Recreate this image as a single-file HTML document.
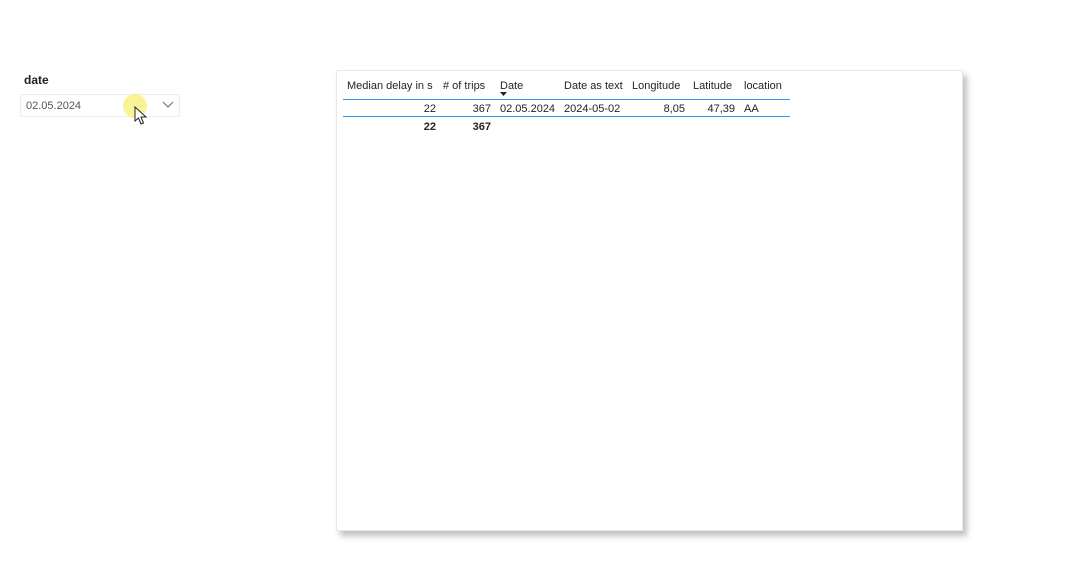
<html><head><style>
body{margin:0;width:1065px;height:574px;background:#fff;position:relative;font-family:"Liberation Sans",sans-serif;overflow:hidden}
.a{position:absolute;font-size:11px;color:#252423;white-space:nowrap;line-height:13px}
.r{text-align:right}
</style></head><body>
<div class="a" style="left:24px;top:74px;font-size:12px;font-weight:bold;color:#222">date</div>
<div style="position:absolute;left:20px;top:94px;width:158px;height:21px;border:1px solid #ececec"></div>
<div class="a" style="left:26px;top:100px;color:#555">02.05.2024</div>
<svg style="position:absolute;left:162px;top:101px" width="12" height="8"><path d="M1 1L6 6L11 1" fill="none" stroke="#666" stroke-width="1"/></svg>
<div style="position:absolute;left:123px;top:94px;width:24px;height:24px;border-radius:50%;background:rgba(245,235,80,.6)"></div>
<svg style="position:absolute;left:134px;top:106px" width="14" height="20"><path d="M1 1L1 15L4.5 12L7 18L9.5 17L7 11L12 11Z" fill="#fff" stroke="#222" stroke-width="1"/></svg>
<div style="position:absolute;left:336px;top:70px;width:625px;height:459px;background:#fff;border:1px solid #e8e8e8;box-shadow:4px 5px 6px rgba(0,0,0,.25)"></div>
<div style="position:absolute;left:343px;top:99px;width:447px;height:1px;background:#2e9af5"></div>
<div style="position:absolute;left:343px;top:116px;width:447px;height:1px;background:#2e9af5"></div>
<div class="a" style="left:347px;top:80px">Median delay in s</div>
<div class="a" style="left:443px;top:80px">#&nbsp;of trips</div>
<div class="a" style="left:500px;top:80px">Date</div>
<svg style="position:absolute;left:500px;top:92px" width="8" height="5"><path d="M0 0H7L3.5 4Z" fill="#252423"/></svg>
<div class="a" style="left:564px;top:80px">Date as text</div>
<div class="a" style="left:632px;top:80px">Longitude</div>
<div class="a" style="left:693px;top:80px">Latitude</div>
<div class="a" style="left:744px;top:80px">location</div>
<div class="a r" style="left:380px;width:56px;top:103px">22</div>
<div class="a r" style="left:440px;width:51px;top:103px">367</div>
<div class="a" style="left:500px;top:103px">02.05.2024</div>
<div class="a" style="left:564px;top:103px">2024-05-02</div>
<div class="a r" style="left:630px;width:55px;top:103px">8,05</div>
<div class="a r" style="left:690px;width:45px;top:103px">47,39</div>
<div class="a" style="left:744px;top:103px">AA</div>
<div class="a r" style="left:380px;width:56px;top:121px;font-weight:bold">22</div>
<div class="a r" style="left:440px;width:51px;top:121px;font-weight:bold">367</div>
</body></html>
